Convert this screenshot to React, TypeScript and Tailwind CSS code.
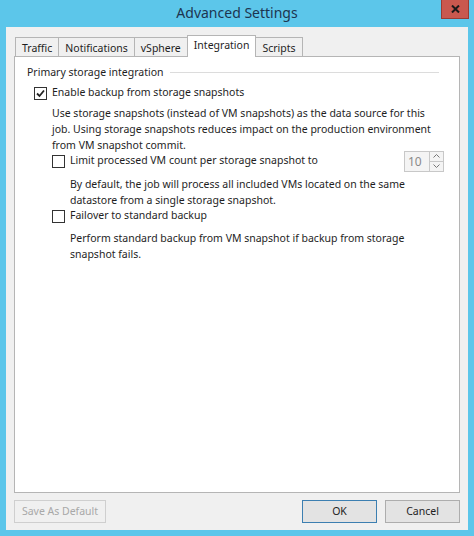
import React from "react";

const font = { fontFamily: '"Noto Sans", "Open Sans", sans-serif' };

function Check({ checked }: { checked?: boolean }) {
  return (
    <div className="w-[13px] h-[13px] border border-[#333] bg-white flex items-center justify-center shrink-0">
      {checked && (
        <svg width="11" height="11" viewBox="0 0 11 11">
          <path d="M2 5.5 L4.5 8 L9 2.5" fill="none" stroke="#222" strokeWidth="1.8" />
        </svg>
      )}
    </div>
  );
}

function Lines({ lines, className }: { lines: string[]; className?: string }) {
  return (
    <div className={className}>
      {lines.map((l) => (
        <div key={l} className="whitespace-nowrap h-[16px] leading-[16px]">{l}</div>
      ))}
    </div>
  );
}

const tabs = ["Traffic", "Notifications", "vSphere", "Integration", "Scripts"];

export default function App() {
  return (
    <div className="w-[474px] h-[536px] bg-[#5cc6ea] flex flex-col text-[10.5px] text-[#1e1e1e]" style={font}>
      {/* title bar */}
      <div className="h-[27px] flex items-start relative shrink-0">
        <div className="flex-1 text-center text-[14px] leading-[26px] text-[#1c3550]">Advanced Settings</div>
        <div className="absolute right-[5px] top-0 w-[28px] h-[19px] bg-[#c9584e] border border-[#9a3c34] border-t-0 flex items-center justify-center">
          <svg width="9" height="8" viewBox="0 0 9 8">
            <path d="M1 0.5 L8 7.5 M8 0.5 L1 7.5" stroke="#1a1a1a" strokeWidth="2" />
          </svg>
        </div>
      </div>

      {/* body */}
      <div className="flex-1 mx-[6px] mb-[6px] bg-[#f0f0f0] flex flex-col px-[8px] pt-[8px]">
        <div className="flex items-end h-[21px] pl-[1px]">
          {tabs.map((t) => {
            const sel = t === "Integration";
            return (
              <div
                key={t}
                className={
                  sel
                    ? "h-[22px] px-[6px] bg-white border border-[#b5b5b5] border-b-0 -mb-[1px] -mr-[1px] relative z-10 leading-[19px]"
                    : "h-[19px] px-[6px] bg-[#f0f0f0] border border-[#b5b5b5] border-b-0 -mr-[1px] leading-[18px] pt-[1px]"
                }
              >
                {t}
              </div>
            );
          })}
        </div>
        <div className="h-[437px] bg-white border border-[#b5b5b5] px-[12px] pt-[8px]">
          <div className="flex items-center gap-[6px] pr-[8px]">
            <span className="leading-[14px]">Primary storage integration</span>
            <div className="flex-1 h-px bg-[#dcdcdc]" />
          </div>
          <div className="pl-[7px] pt-[6px]">
            <div className="flex items-center gap-[5px] h-[16px]">
              <Check checked />
              <span>Enable backup from storage snapshots</span>
            </div>
            <div className="pl-[18px] pt-[4px]">
              <Lines
                lines={[
                  "Use storage snapshots (instead of VM snapshots) as the data source for this",
                  "job. Using storage snapshots reduces impact on the production environment",
                  "from VM snapshot commit.",
                ]}
              />
              <div className="flex items-center h-[16px]">
                <div className="flex items-center gap-[5px] flex-1">
                  <Check />
                  <span>Limit processed VM count per storage snapshot to</span>
                </div>
                <div className="flex h-[21px] w-[40px] border border-[#c8c8c8] bg-[#f4f4f4] mr-[3px]">
                  <div className="flex-1 pl-[3px] text-[#8a8a8a] text-[12px] leading-[19px]">10</div>
                  <div className="w-[14px] flex flex-col border-l border-[#c8c8c8]">
                    <div className="flex-1 flex items-center justify-center border-b border-[#c8c8c8]">
                      <svg width="7" height="4" viewBox="0 0 7 4"><path d="M0.5 3.5 L3.5 0.5 L6.5 3.5" fill="none" stroke="#777" /></svg>
                    </div>
                    <div className="flex-1 flex items-center justify-center">
                      <svg width="7" height="4" viewBox="0 0 7 4"><path d="M0.5 0.5 L3.5 3.5 L6.5 0.5" fill="none" stroke="#777" /></svg>
                    </div>
                  </div>
                </div>
              </div>
              <Lines
                className="pl-[18px] pt-[7px]"
                lines={[
                  "By default, the job will process all included VMs located on the same",
                  "datastore from a single storage snapshot.",
                ]}
              />
              <div className="flex items-center gap-[5px] h-[16px]">
                <Check />
                <span>Failover to standard backup</span>
              </div>
              <Lines
                className="pl-[18px] pt-[6px]"
                lines={[
                  "Perform standard backup from VM snapshot if backup from storage",
                  "snapshot fails.",
                ]}
              />
            </div>
          </div>
        </div>
        <div className="flex items-center mt-[7px]">
          <div className="w-[92px] h-[23px] border border-[#cfcfcf] bg-[#f0f0f0] text-[#a8a8a8] flex items-center justify-center">Save As Default</div>
          <div className="flex-1" />
          <div className="w-[75px] h-[23px] border border-[#3c7fb1] bg-[#e3e3e3] flex items-center justify-center">OK</div>
          <div className="w-[75px] h-[23px] border border-[#adadad] bg-[#e3e3e3] flex items-center justify-center ml-[8px]">Cancel</div>
        </div>
      </div>
    </div>
  );
}
